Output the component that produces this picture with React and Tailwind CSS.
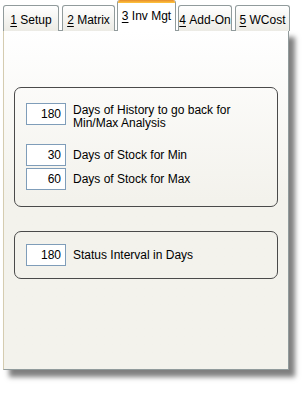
import React from 'react';

const tabs = [
  { num: '1', label: 'Setup', w: 'w-[56px]' },
  { num: '2', label: 'Matrix', w: 'w-[53px]' },
  { num: '3', label: 'Inv Mgt', w: 'w-[59px]', active: true },
  { num: '4', label: 'Add-On', w: 'w-[54px]' },
  { num: '5', label: 'WCost', w: 'w-[55px]' },
];

const Tab = ({ num, label, w, active }) => {
  if (active) {
    return (
      <div className={`${w} h-[31px] -mx-[1px] relative z-10 flex flex-col bg-white border-x border-[#919b9c] rounded-t-[3px] overflow-hidden`}>
        <div className="h-[3px] bg-gradient-to-b from-[#e68b2c] to-[#ffc73c]" />
        <div className="flex-1 flex items-start justify-center pt-[4px] text-[12px] text-black">
          <span className="underline underline-offset-[2px]">{num}</span>
          <span>&nbsp;{label}</span>
        </div>
      </div>
    );
  }
  return (
    <div className={`${w} h-[26px] flex items-start justify-center pt-[5px] text-[12px] text-black border border-b-0 border-[#919b9c] rounded-t-[3px] bg-gradient-to-b from-white to-[#ecebe5]`}>
      <span className="underline underline-offset-[2px]">{num}</span>
      <span>&nbsp;{label}</span>
    </div>
  );
};

const NumBox = ({ value }) => (
  <div className="w-[40px] h-[22px] shrink-0 bg-white border border-[#7f9db9] flex items-center justify-end pr-[4px] text-[12px] text-black">
    {value}
  </div>
);

export default function App() {
  return (
    <div className="w-[303px] h-[411px] bg-white pl-[3px]" style={{ fontFamily: '"Liberation Sans", Arial, sans-serif' }}>
      {/* Tab strip */}
      <div className="flex items-end gap-[3px] h-[31px]">
        <Tab {...tabs[0]} />
        <Tab {...tabs[1]} />
        <Tab {...tabs[2]} />
        <Tab {...tabs[3]} />
        <Tab {...tabs[4]} />
      </div>

      {/* Tab page */}
      <div className="w-[286px] h-[340px] -mt-[1px] border border-[#919b9c] border-l-[#d5ccb0] bg-gradient-to-b from-white via-[#f3f2ec] to-[#f3f2ec] shadow-[6px_7px_5px_rgba(0,0,0,0.5)] flex flex-col px-[10px]">
        {/* Group 1 */}
        <div className="mt-[56px] h-[120px] border border-[#4a4a4a] rounded-[7px] flex flex-col pl-[11px] pt-[15px]">
          <div className="flex items-start gap-[7px]">
            <NumBox value="180" />
            <div className="text-[12px] leading-[13px] text-black pt-[1px]">
              Days of History to go back for<br />Min/Max Analysis
            </div>
          </div>
          <div className="flex items-center gap-[7px] mt-[14px]">
            <NumBox value="30" />
            <span className="text-[12px] text-black">Days of Stock for Min</span>
          </div>
          <div className="flex items-center gap-[7px] mt-[2px]">
            <NumBox value="60" />
            <span className="text-[12px] text-black">Days of Stock for Max</span>
          </div>
        </div>

        {/* Group 2 */}
        <div className="mt-[24px] h-[48px] border border-[#4a4a4a] rounded-[7px] flex items-center pl-[11px]">
          <div className="flex items-center gap-[7px]">
            <NumBox value="180" />
            <span className="text-[12px] text-black">Status Interval in Days</span>
          </div>
        </div>
      </div>
    </div>
  );
}
